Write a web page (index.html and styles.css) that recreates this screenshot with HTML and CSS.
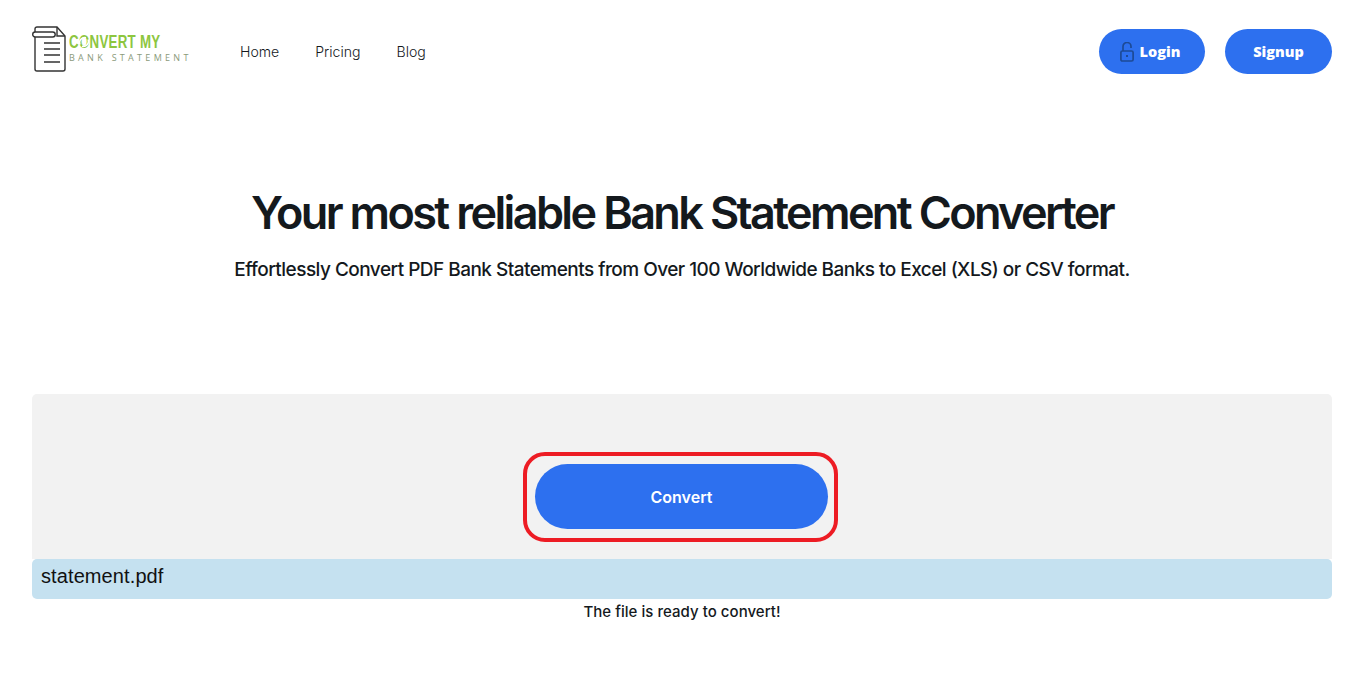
FILE: index.html
```html
<!DOCTYPE html>
<html lang="en">
<head>
  <meta charset="UTF-8" />
  <meta name="viewport" content="width=device-width, initial-scale=1.0"/>
  <title>Convert My Bank Statement</title>
  <link rel="stylesheet" href="styles.css">
</head>
<body>
  <header>
    <div class="left">
      <a href="#" class="logo">
        <svg class="logo-icon" width="36" height="46" viewBox="0 0 36 46" fill="none" stroke="#333" stroke-width="1.4">
          <path d="M3 6V3a2 2 0 0 1 2-2h20l8 9v33a2 2 0 0 1-2 2H5a2 2 0 0 1-2-2V11"/>
          <path d="M25 1v9h8"/>
          <rect x="0.700" y="6" width="22.500" height="5" rx="2.500" fill="#fff"/>
          <path d="M12 17h16M12 23h16M12 29h16M12 36h16" stroke-width="1.300"/>
        </svg>
        <div class="logo-text">
          <span class="logo-top">CONVERT MY</span>
          <span class="logo-bottom">BANK STATEMENT</span>
          <svg class="logo-swirl" width="12" height="12" viewBox="0 0 12 12" fill="none" stroke="#fff" stroke-width="1.600">
            <path d="M2 8.500A5 5 0 0 1 8 1.800"/>
            <path d="M10 3.500A5 5 0 0 1 4 10.200"/>
          </svg>
        </div>
      </a>
      <nav>
        <a href="#">Home</a>
        <a href="#">Pricing</a>
        <a href="#">Blog</a>
      </nav>
    </div>
    <div class="actions">
      <button class="btn login">
        <svg width="14" height="20" viewBox="0 0 14 20" fill="none" stroke="#1d4a96" stroke-width="1.700">
          <rect x="0.900" y="9" width="12.200" height="10" rx="1.500"/>
          <path d="M3 9V4.500a4 4 0 0 1 8 0V6"/>
          <path d="M7 13v2" stroke-width="2"/>
        </svg>
        Login
      </button>
      <button class="btn signup">Signup</button>
    </div>
  </header>

  <section class="hero">
    <h1>Your most reliable Bank Statement Converter</h1>
    <p>Effortlessly Convert PDF Bank Statements from Over 100 Worldwide Banks to Excel (XLS) or CSV format.</p>
  </section>

  <main>
    <div class="panel">
      <div class="convert-wrap">
        <button class="convert">Convert</button>
      </div>
    </div>
    <div class="file">statement.pdf</div>
    <p class="status">The file is ready to convert!</p>
  </main>
</body>
</html>
```

FILE: styles.css
```css
* {
  margin: 0;
  padding: 0;
  box-sizing: border-box;
}

body {
  font-family: Inter, 'Open Sans', sans-serif;
  background-color: #ffffff;
  color: #14191d;
  padding: 0 39px 0 32px;
  height: 681px;
  overflow: hidden;
}

header {
  display: flex;
  justify-content: space-between;
  align-items: center;
  height: 103px;
}

.left {
  display: flex;
  align-items: center;
}

.logo {
  display: flex;
  align-items: flex-start;
  gap: 1px;
  width: 208px;
  height: 46px;
  margin-top: -6px;
  text-decoration: none;
}

.logo-text {
  position: relative;
  display: flex;
  flex-direction: column;
  gap: 2px;
  padding-top: 7px;
}

.logo-top {
  font-family: 'Liberation Sans', sans-serif;
  font-size: 19px;
  line-height: 18px;
  font-weight: 700;
  letter-spacing: 0.4px;
  color: #8dc63f;
  transform: scaleX(0.7);
  transform-origin: left;
  white-space: nowrap;
}

.logo-bottom {
  font-family: 'Open Sans', sans-serif;
  font-size: 9px;
  line-height: 10px;
  letter-spacing: 3.3px;
  color: #8a9a7a;
  white-space: nowrap;
}

.logo-swirl {
  position: absolute;
  left: 9px;
  top: 10px;
}

nav {
  display: flex;
  gap: 36px;
}

nav a {
  font-family: Inter, sans-serif;
  font-size: 14.100px;
  font-weight: 300;
  color: #14191d;
  text-decoration: none;
}

.actions {
  display: flex;
  gap: 20px;
}

.btn {
  display: flex;
  align-items: center;
  justify-content: center;
  gap: 6px;
  height: 45px;
  border: none;
  border-radius: 23px;
  background-color: #2d70ef;
  color: white;
  font-family: 'Open Sans', sans-serif;
  font-size: 14.500px;
  font-weight: 800;
  cursor: pointer;
}

.login {
  width: 106px;
  padding-right: 4px;
}

.signup {
  width: 107px;
}

.hero {
  text-align: center;
  padding-top: 83px;
  height: 291px;
}

.hero h1 {
  font-size: 45px;
  line-height: 54px;
  font-weight: 600;
  letter-spacing: -2.640px;
}

.hero p {
  margin-top: 15px;
  font-size: 19px;
  line-height: 30px;
  font-weight: 500;
  letter-spacing: -0.530px;
}

.panel {
  display: flex;
  justify-content: center;
  height: 165px;
  padding-top: 58px;
  background-color: #f2f2f2;
  border-radius: 5px 5px 0 0;
}

.convert-wrap {
  height: 90px;
  margin-right: 3px;
  padding: 8px 6px 8px 8px;
  border: 4px solid #ed1c24;
  border-radius: 22px;
}

.convert {
  width: 293px;
  height: 65px;
  border: none;
  border-radius: 33px;
  background-color: #2d70ef;
  color: white;
  font-family: Inter, sans-serif;
  font-size: 16px;
  font-weight: 600;
  cursor: pointer;
}

.file {
  height: 40px;
  padding: 5px 9px;
  background-color: #c5e1f0;
  border-radius: 5px;
  font-family: 'Liberation Sans', sans-serif;
  font-size: 20px;
  line-height: 24px;
  letter-spacing: 0.100px;
  color: #111;
}

.status {
  margin-top: 3px;
  text-align: center;
  font-size: 15px;
  line-height: 20px;
  font-weight: 500;
  letter-spacing: 0.040px;
}
```
